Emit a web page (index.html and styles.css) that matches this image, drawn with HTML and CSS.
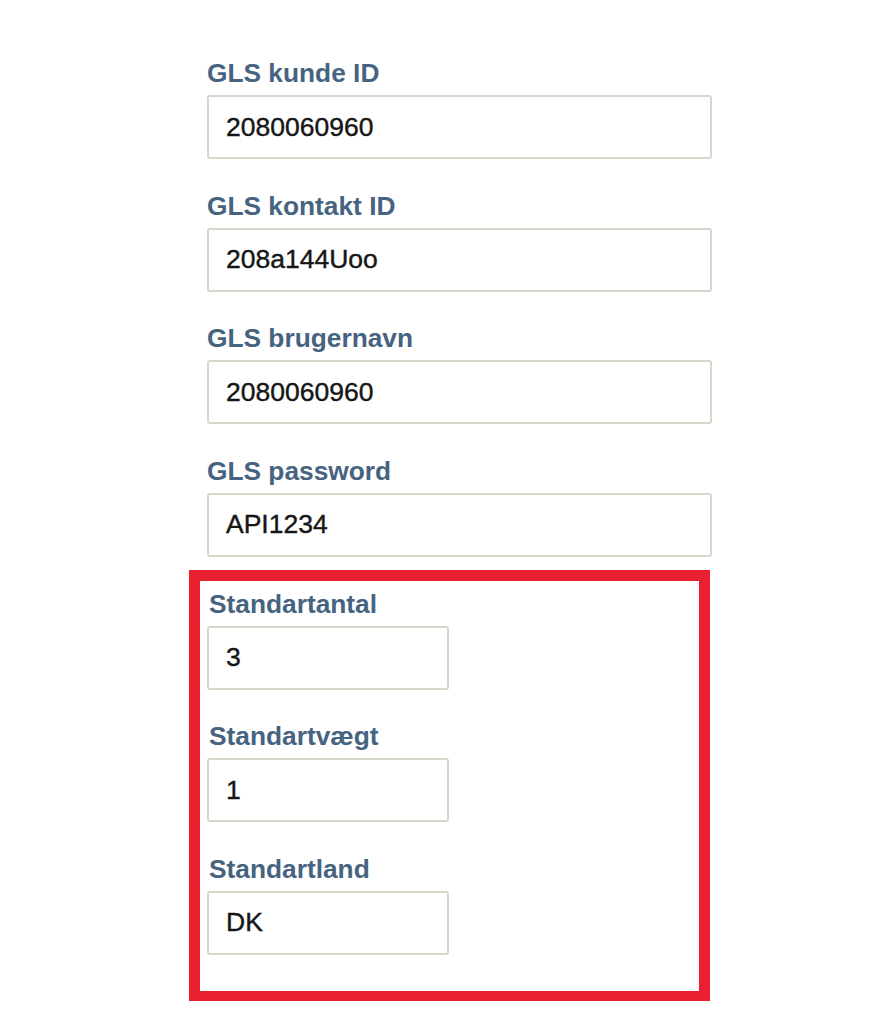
FILE: index.html
```html
<!DOCTYPE html>
<html lang="da">
<head>
<meta charset="utf-8">
<title>GLS indstillinger</title>
<link rel="stylesheet" href="styles.css">
</head>
<body>
<form class="settings">
  <div class="field">
    <label class="label">GLS kunde ID</label>
    <div class="input">2080060960</div>
  </div>
  <div class="field">
    <label class="label">GLS kontakt ID</label>
    <div class="input">208a144Uoo</div>
  </div>
  <div class="field">
    <label class="label">GLS brugernavn</label>
    <div class="input">2080060960</div>
  </div>
  <div class="field">
    <label class="label">GLS password</label>
    <div class="input">API1234</div>
  </div>
  <div class="highlight">
    <div class="field">
      <label class="label">Standartantal</label>
      <div class="input input-short">3</div>
    </div>
    <div class="field">
      <label class="label">Standartvægt</label>
      <div class="input input-short">1</div>
    </div>
    <div class="field">
      <label class="label">Standartland</label>
      <div class="input input-short">DK</div>
    </div>
  </div>
</form>
</body>
</html>
```

FILE: styles.css
```css
html, body {
  margin: 0;
  padding: 0;
  background: #ffffff;
}

body {
  font-family: "Liberation Sans", Arial, sans-serif;
}

.settings {
  padding: 58px 0 0 207px;
  width: 505px;
}

.field {
  display: flex;
  flex-direction: column;
  margin-top: 31.5px;
}

.settings > .field:first-child,
.highlight > .field:first-child {
  margin-top: 0;
}

.label {
  display: block;
  font-size: 26.3px;
  line-height: 30px;
  font-weight: 700;
  color: #46637f;
  margin-bottom: 7px;
}

.highlight .label {
  padding-left: 2px;
}

.input {
  box-sizing: border-box;
  height: 64px;
  width: 505px;
  border: 2px solid #d7d8cc;
  border-radius: 3px;
  padding-left: 17px;
  display: flex;
  align-items: center;
  font-size: 26.5px;
  color: #161616;
  -webkit-text-stroke: 0.4px #161616;
  background: #fff;
}

.input-short {
  width: 242px;
}

.highlight {
  margin: 13px 0 0 -18px;
  width: 521px;
  box-sizing: border-box;
  border-style: solid;
  border-color: #e8202f;
  border-width: 11px 11px 10px 11px;
  padding: 8px 0 36px 7px;
}
```
